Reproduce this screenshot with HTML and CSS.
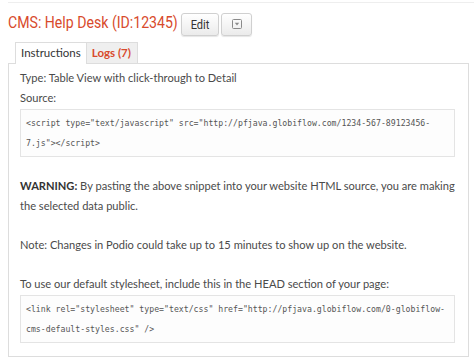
FILE: index.html
```html
<!DOCTYPE html>
<html>
<head>
<meta charset="utf-8">
<link rel="stylesheet" href="styles.css">
</head>
<body>
<div class="page">
  <div class="header">
    <h1 class="title"><span class="title-text">CMS: Help Desk (ID:12345)</span></h1>
    <div class="btn-group">
      <button class="btn btn-edit"><span class="edit-text">Edit</span></button>
      <button class="btn btn-menu" aria-label="More">
        <svg width="10" height="10" viewBox="0 0 10 10"><rect x="0.5" y="0.5" width="9" height="9" rx="1" fill="none" stroke="#8a8a8a" stroke-width="1"/><path d="M2.8 3.8 L7.2 3.8 L5 6.4 Z" fill="#8a8a8a"/></svg>
      </button>
    </div>
  </div>
  <div class="tabs">
    <div class="tab tab-active">Instructions</div>
    <div class="tab tab-logs">Logs (7)</div>
  </div>
  <div class="panel">
    <p class="para">Type: Table View with click-through to Detail<br>Source:</p>
    <pre class="code">&lt;script type="text/javascript" src="http://pfjava.globiflow.com/1234-567-89123456-<br>7.js"&gt;&lt;/script&gt;</pre>
    <p class="para gap"><strong>WARNING:</strong> By pasting the above snippet into your website HTML source, you are making the selected data public.</p>
    <p class="para gap">Note: Changes in Podio could take up to 15 minutes to show up on the website.</p>
    <p class="para gap">To use our default stylesheet, include this in the HEAD section of your page:</p>
    <pre class="code">&lt;link rel="stylesheet" type="text/css" href="http://pfjava.globiflow.com/0-globiflow-<br>cms-default-styles.css" /&gt;</pre>
  </div>
</div>
</body>
</html>
```
FILE: styles.css
```css
html, body {
  margin: 0;
  padding: 0;
  background: #fff;
}
.page {
  margin: 2px 0 0 8px;
  border-top: 1px solid #eeeeee;
  padding-right: 6px;
  font-family: Lato, "Open Sans", sans-serif;
  color: #4a4a4a;
}
.header {
  display: flex;
  align-items: center;
  height: 37px;
}
.title {
  margin: 0;
  font-family: Roboto, sans-serif;
  font-weight: normal;
  font-size: 17px;
  color: #d84a2c;
  width: 173px;
  flex: none;
  white-space: nowrap;
  overflow: visible;
}
.title-text {
  display: inline-block;
  transform: scaleX(0.83);
  transform-origin: left center;
}
.btn-group {
  display: flex;
  gap: 2px;
  margin-top: 5px;
}
.btn {
  height: 23px;
  border: 1px solid #d0d0d0;
  border-radius: 3px;
  background: linear-gradient(#ffffff, #ebebeb);
  box-shadow: 0 1px 1px rgba(0,0,0,0.1);
  padding: 0;
  display: flex;
  align-items: center;
  justify-content: center;
  color: #333;
}
.btn-edit {
  width: 38px;
  font-family: Roboto, sans-serif;
  font-size: 13px;
}
.edit-text {
  display: inline-block;
  transform: scaleX(0.85);
}
.btn-menu {
  width: 31px;
}
.tabs {
  display: flex;
  margin-left: 7px;
  margin-top: 2px;
  position: relative;
  z-index: 1;
  margin-bottom: -1px;
}
.tab {
  height: 20px;
  line-height: 20px;
  font-size: 11.5px;
  padding: 0 5px;
  border: 1px solid #dddddd;
  border-bottom: none;
}
.tab-active {
  background: #fff;
  color: #333;
  height: 21px;
}
.tab-logs {
  background: #efefef;
  color: #d84a2c;
  font-weight: bold;
  border-left: none;
  width: 40px;
}
.panel {
  border: 1px solid #dddddd;
  width: 447px;
  padding: 4px 1px 13px 11px;
}
.para {
  margin: 0;
  font-size: 11.1px;
  line-height: 20px;
}
.para strong {
  color: #333;
}
.gap {
  margin-top: 19px;
}
.code {
  margin: 1px 12px 0 0;
  border: 1px solid #e4e4e4;
  background: #fdfdfd;
  padding: 3px 5px 3px 5px;
  font-family: "DejaVu Sans Mono", monospace;
  font-size: 8.2px;
  line-height: 20px;
  color: #555;
  white-space: pre;
}
```
